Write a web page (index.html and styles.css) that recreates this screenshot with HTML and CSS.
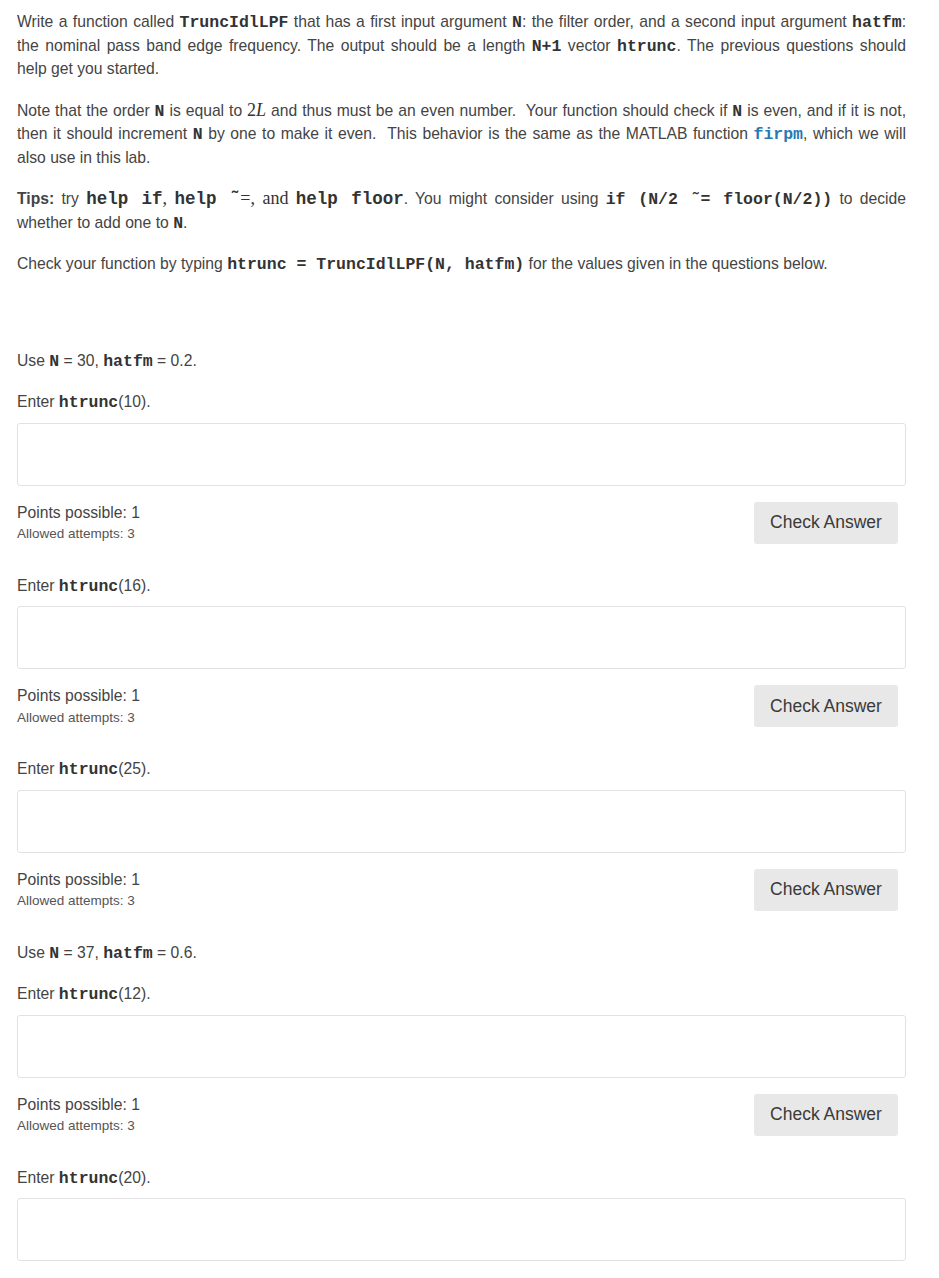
FILE: index.html
```html
<!doctype html>
<html>

  <head>
    <title>TruncIdlLPF</title>
    <link rel="stylesheet" href="styles.css">
  </head>

  <body>
    <div class="intro">
      <p class="text">Write a function called <code class="mono">TruncIdlLPF</code> that has a first input argument <code class="mono">N</code>: the filter order, and a second input argument <code class="mono">hatfm</code>: the nominal pass band edge frequency. The output should be a length <code class="mono">N+1</code> vector <code class="mono">htrunc</code>. The previous questions should help&nbsp;get&nbsp;you&nbsp;started.</p>
      <p class="text">Note that the order <code class="mono">N</code> is equal to <span class="math">2<i>L</i></span> and thus must be an even number.&nbsp; Your function should check if <code class="mono">N</code> is even, and if it is not, then it should increment <code class="mono">N</code> by one to make it even.&nbsp; This behavior is the same as the MATLAB function <a href="#" class="mono link">firpm</a>, which we will also&nbsp;use&nbsp;in&nbsp;this&nbsp;lab.</p>
      <p class="text"><b>Tips:</b> try <code class="mono big">help if</code><span class="math">, </span><code class="mono big">help ˜</code><span class="math">=, and </span><code class="mono big">help floor</code>. You might consider using <code class="mono">if (N/2 ˜= floor(N/2))</code> to decide whether&nbsp;to&nbsp;add&nbsp;one&nbsp;to&nbsp;<code class="mono">N</code>.</p>
      <p class="text">Check your function by typing <code class="mono">htrunc = TruncIdlLPF(N, hatfm)</code> for the values given in the questions below.</p>
    </div>

    <div class="group">
      <p class="text">Use <code class="mono">N</code> = 30, <code class="mono">hatfm</code> = 0.2.</p>

      <div class="question">
        <p class="prompt">Enter <code class="mono">htrunc</code>(10).</p>
        <input class="answer" type="text">
        <div class="score">
          <div>
            <div class="points">Points possible: 1</div>
            <div class="attempts">Allowed attempts: 3</div>
          </div>
          <button class="check">Check Answer</button>
        </div>
      </div>

      <div class="question">
        <p class="prompt">Enter <code class="mono">htrunc</code>(16).</p>
        <input class="answer" type="text">
        <div class="score">
          <div>
            <div class="points">Points possible: 1</div>
            <div class="attempts">Allowed attempts: 3</div>
          </div>
          <button class="check">Check Answer</button>
        </div>
      </div>

      <div class="question">
        <p class="prompt">Enter <code class="mono">htrunc</code>(25).</p>
        <input class="answer" type="text">
        <div class="score">
          <div>
            <div class="points">Points possible: 1</div>
            <div class="attempts">Allowed attempts: 3</div>
          </div>
          <button class="check">Check Answer</button>
        </div>
      </div>
    </div>

    <div class="group second">
      <p class="text">Use <code class="mono">N</code> = 37, <code class="mono">hatfm</code> = 0.6.</p>

      <div class="question">
        <p class="prompt">Enter <code class="mono">htrunc</code>(12).</p>
        <input class="answer" type="text">
        <div class="score">
          <div>
            <div class="points">Points possible: 1</div>
            <div class="attempts">Allowed attempts: 3</div>
          </div>
          <button class="check">Check Answer</button>
        </div>
      </div>

      <div class="question">
        <p class="prompt">Enter <code class="mono">htrunc</code>(20).</p>
        <input class="answer" type="text">
      </div>
    </div>
  </body>
</html>
```

FILE: styles.css
```css
body {
    margin: 0;
    padding: 10px 33px 0 17px;
    font-family: "Liberation Sans", Arial, sans-serif;
    font-size: 15.7px;
    line-height: 23.5px;
    color: #444;
    background: #fff;
}

.text, .prompt {
    margin: 0 0 18px;
    text-align: justify;
}

.mono {
    font-family: "Liberation Mono", "Courier New", monospace;
    font-weight: bold;
    font-size: 16.5px;
    line-height: 1;
    color: #333;
}

.mono.big {
    font-size: 17.5px;
}

.link {
    color: #2a78b2;
    text-decoration: none;
}

.math {
    font-family: "Liberation Serif", "Times New Roman", serif;
    font-size: 18px;
    line-height: 1;
    color: #333;
}

.math i {
    font-style: italic;
}

.intro {
    margin-bottom: 73px;
}

.prompt {
    margin-bottom: 9px;
}

.answer {
    display: block;
    box-sizing: border-box;
    width: 100%;
    height: 63px;
    margin: 0 0 15px;
    border: 1px solid #e2e2e2;
    border-radius: 3px;
    background: #fff;
}

.score {
    display: flex;
    justify-content: space-between;
    align-items: flex-start;
    margin-bottom: 29px;
}

.points {
    line-height: 23.5px;
}

.attempts {
    font-size: 13.5px;
    line-height: 20.5px;
    color: #555;
}

.check {
    margin: 1px 8px 0 0;
    width: 144px;
    height: 42px;
    padding: 0;
    border: none;
    border-radius: 3px;
    background: #e8e8e8;
    font-family: "Liberation Sans", Arial, sans-serif;
    font-size: 17.5px;
    color: #3a3a3a;
}

.second .text {
    margin-top: 3px;
}
```
